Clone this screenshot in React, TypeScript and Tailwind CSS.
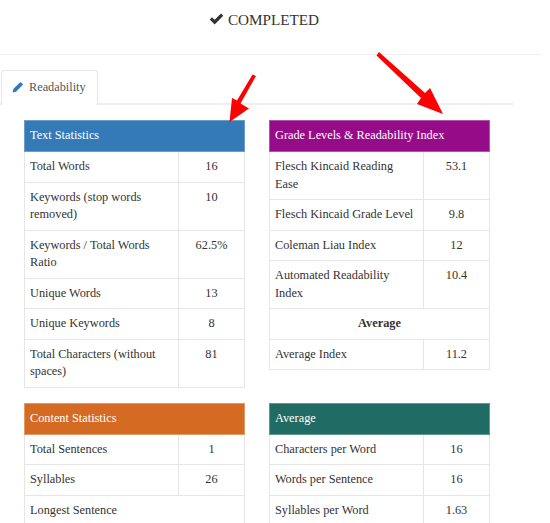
type Row = { label: string; value?: string; heading?: boolean };

const TEXT_ROWS: Row[] = [
  { label: 'Total Words', value: '16' },
  { label: 'Keywords (stop words removed)', value: '10' },
  { label: 'Keywords / Total Words Ratio', value: '62.5%' },
  { label: 'Unique Words', value: '13' },
  { label: 'Unique Keywords', value: '8' },
  { label: 'Total Characters (without spaces)', value: '81' },
];

const GRADE_ROWS: Row[] = [
  { label: 'Flesch Kincaid Reading Ease', value: '53.1' },
  { label: 'Flesch Kincaid Grade Level', value: '9.8' },
  { label: 'Coleman Liau Index', value: '12' },
  { label: 'Automated Readability Index', value: '10.4' },
  { label: 'Average', heading: true },
  { label: 'Average Index', value: '11.2' },
];

const CONTENT_ROWS: Row[] = [
  { label: 'Total Sentences', value: '1' },
  { label: 'Syllables', value: '26' },
  { label: 'Longest Sentence' },
];

const AVERAGE_ROWS: Row[] = [
  { label: 'Characters per Word', value: '16' },
  { label: 'Words per Sentence', value: '16' },
  { label: 'Syllables per Word', value: '1.63' },
];

const StatTable = ({ title, headerClass, rows }: { title: string; headerClass: string; rows: Row[] }) => (
  <table className="w-[221px] table-fixed border-collapse text-[12.3px] leading-[17.5px] text-[#333]">
    <colgroup>
      <col className="w-[154px]" />
      <col />
    </colgroup>
    <thead>
      <tr>
        <th colSpan={2} className={`h-[31px] border pl-[5px] text-left font-normal text-white ${headerClass}`}>
          {title}
        </th>
      </tr>
    </thead>
    <tbody>
      {rows.map((row) => (
        <tr key={row.label}>
          {row.heading ? (
            <td colSpan={2} className="border border-[#e6e6e6] px-[6px] py-[6px] text-center font-bold">
              {row.label}
            </td>
          ) : row.value === undefined ? (
            <td colSpan={2} className="border border-[#e6e6e6] py-[6px] pr-[6px] pl-[5px]">
              {row.label}
            </td>
          ) : (
            <>
              <td className="border border-[#e6e6e6] py-[6px] pr-[6px] pl-[5px] align-top">{row.label}</td>
              <td className="border border-[#e6e6e6] px-[6px] py-[6px] text-center align-top">{row.value}</td>
            </>
          )}
        </tr>
      ))}
    </tbody>
  </table>
);

export default function App() {
  return (
    <div className="relative h-[523px] w-[550px] overflow-hidden bg-white font-['Liberation_Serif',serif]">
      {/* Status heading */}
      <div className="flex h-[55px] w-[540px] items-start justify-center gap-[4px] border-b border-[#eeeeee] pt-[9px] pr-[12px] text-[15.2px] leading-[21px] text-[#333]">
        <svg viewBox="0 0 16 14" className="mt-[3px] h-[14px] w-[15px]" fill="#333333">
          <path d="M.8 7.4 3.2 5 6 7.8 12.8 1 15.200 3.400 6 12.800Z" />
        </svg>
        COMPLETED
      </div>

      {/* Tabs */}
      <div className="mt-[15px] flex h-[35px] w-[513px] border-b-2 border-[#eeeeee]">
        <div className="ml-px flex h-[35px] w-[97px] items-center gap-[5px] rounded-t-[3px] border border-b-0 border-[#e6e6e6] bg-white pb-[2px] pl-[10px] text-[12.3px] text-[#555]">
          <svg viewBox="0 0 12 12" className="h-[12px] w-[12px]" fill="#337ab7">
            <path d="M8.4.9 11.1 3.6 4 10.7.6 11.4 1.3 8Z" />
          </svg>
          Readability
        </div>
      </div>

      {/* Stat tables */}
      <div className="mt-[15px] ml-[24px] grid w-[466px] grid-cols-[221px_221px] items-start gap-x-[24px] gap-y-[15px]">
        <StatTable title="Text Statistics" headerClass="bg-[#337ab7] border-[#6b9dc9]" rows={TEXT_ROWS} />
        <StatTable title="Grade Levels & Readability Index" headerClass="bg-[#960b88] border-[#b355aa]" rows={GRADE_ROWS} />
        <StatTable title="Content Statistics" headerClass="bg-[#d56b22] border-[#e09a6a]" rows={CONTENT_ROWS} />
        <StatTable title="Average" headerClass="bg-[#206b64] border-[#639792]" rows={AVERAGE_ROWS} />
      </div>

      {/* Red annotation arrows */}
      <svg className="pointer-events-none absolute top-0 left-0" width="550" height="523" fill="#ff0000">
        <path d="M252.500 74.500 256 76 240.500 103.500 249 108.500 229.500 122 232 98 237 100.500Z" />
        <path d="M379 52 376.500 55.500 421 98 417 104 443 114 430 88 425 93Z" />
      </svg>
    </div>
  );
}
